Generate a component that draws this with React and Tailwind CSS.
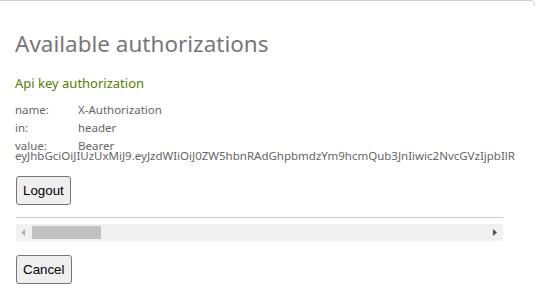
import React from 'react';

const token =
  'eyJhbGciOiJIUzUxMiJ9.eyJzdWIiOiJ0ZW5hbnRAdGhpbmdzYm9hcmQub3JnIiwic2NvcGVzIjpbIlR';

const rows = [
  { label: 'name:', value: 'X-Authorization' },
  { label: 'in:', value: 'header' },
];

const App = () => {
  return (
    <div className="w-[536px] h-[292px] overflow-hidden bg-white font-['Noto_Sans',sans-serif]">
      {/* modal top edge */}
      <div className="flex w-[535px]">
        <div className="flex-1 border-t border-[#cfcfcf]" />
        <div className="w-[5px] h-[6px] border-t border-r border-[#cfcfcf] rounded-tr-[5px]" />
      </div>

      <div className="px-[15px] pt-[22px]">
        <h2 className="text-[22.5px] leading-[32px] text-[#777]">Available authorizations</h2>

        <h3 className="mt-[13px] text-[13px] leading-[20px] text-[#547f00]">Api key authorization</h3>

        <div className="mt-[8px] text-[11.5px] text-[#666] w-[487px]">
          {rows.map((row) => (
            <div key={row.label} className="leading-[10px] py-[4px]">
              <span className="inline-block w-[63px]">{row.label}</span>
              {row.value}
            </div>
          ))}
          <div className="leading-[10px] py-[4px] whitespace-normal">
            <span className="inline-block w-[63px]">value:</span>
            Bearer {token}
          </div>
        </div>

        <button
          type="button"
          className="mt-[11px] ml-px px-[6px] py-[6px] text-[13.33px] leading-[15px] font-['Liberation_Sans',Arial,sans-serif] text-black bg-[#efefef] border border-[#767676] rounded-[3px]"
        >
          Logout
        </button>

        <div className="ml-px mt-[12px] w-[487px] border-t border-[#cccccc]" />

        {/* horizontal scrollbar */}
        <div className="ml-px mt-[6px] w-[487px] h-[17px] bg-[#f1f1f1] flex items-center">
          <svg width="16" height="17" viewBox="0 0 16 17" className="shrink-0">
            <path d="M9 5.5 L5.5 8.5 L9 11.5 Z" fill="#a3a3a3" />
          </svg>
          <div className="w-[69px] h-[13px] bg-[#c1c1c1]" />
          <div className="flex-1" />
          <svg width="16" height="17" viewBox="0 0 16 17" className="shrink-0">
            <path d="M6 5 L10 8.5 L6 12 Z" fill="#505050" />
          </svg>
        </div>

        <button
          type="button"
          className="mt-[14px] ml-px px-[6px] py-[6px] text-[13.33px] leading-[15px] font-['Liberation_Sans',Arial,sans-serif] text-black bg-[#efefef] border border-[#767676] rounded-[3px]"
        >
          Cancel
        </button>
      </div>
    </div>
  );
};

export default App;
